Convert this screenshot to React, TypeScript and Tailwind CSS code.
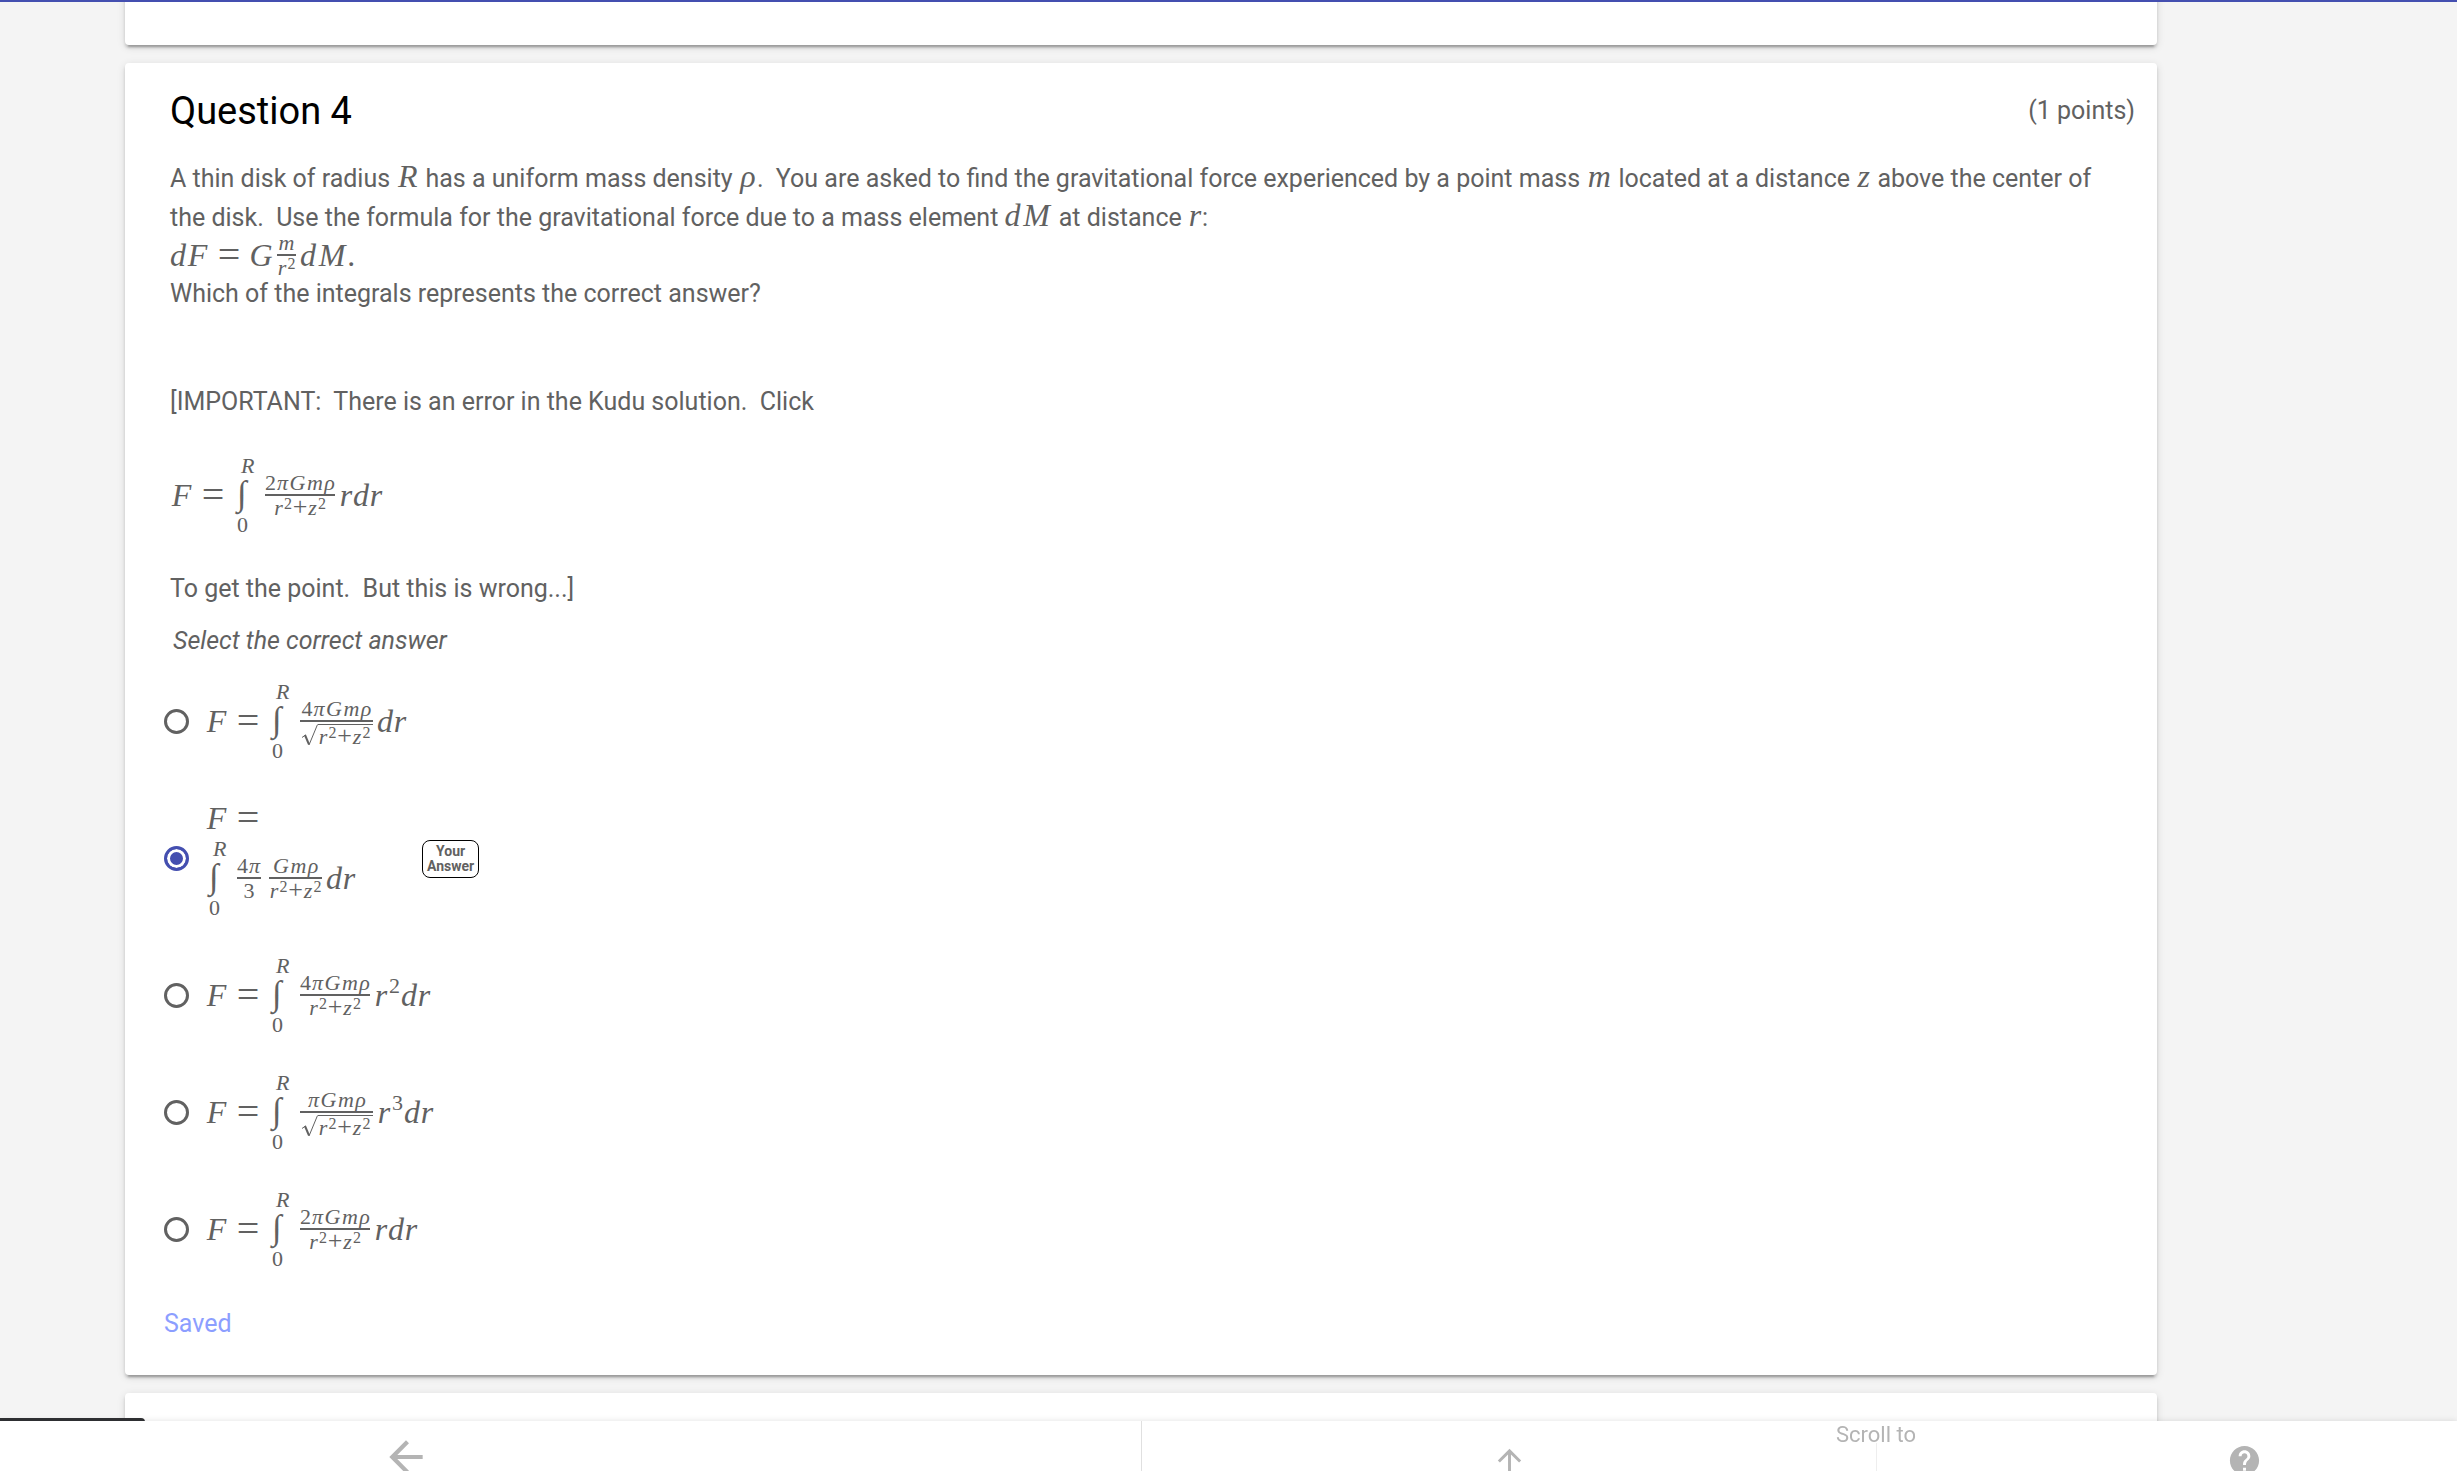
import type { ReactNode } from "react";
import { MdArrowBack, MdArrowUpward, MdHelp } from "react-icons/md";

// advance widths of the math symbols, normal size
const symbolWidth: Record<string, string> = {
  R: "w-[23px]",
  F: "w-[23px]",
  G: "w-[24px]",
  M: "w-[32px]",
  m: "w-[26px]",
  d: "w-[16px]",
  r: "w-[14px]",
  z: "w-[15px]",
  ρ: "w-[18px]",
};

// the same inside fractions
const smallWidth: Record<string, string> = {
  G: "w-[17px]",
  m: "w-[18px]",
  r: "w-[10px]",
  z: "w-[10px]",
  π: "w-[13px]",
  ρ: "w-[11px]",
};

function Sym({ children }: { children: string }) {
  return (
    <span className="font-['Liberation_Serif',serif] text-[32px] leading-none italic whitespace-nowrap">
      {children.split("").map((ch, i) => (
        <span key={i} className={`inline-block text-center ${symbolWidth[ch] ?? ""}`}>
          {ch}
        </span>
      ))}
    </span>
  );
}

function Small({ children }: { children: string }) {
  return (
    <>
      {children.split("").map((ch, i) => (
        <span
          key={i}
          className={`inline-block text-center ${smallWidth[ch] ?? "w-[11px]"} ${/\d/.test(ch) ? "not-italic" : "italic"}`}
        >
          {ch}
        </span>
      ))}
    </>
  );
}

function Plus() {
  return <span className="inline-block w-[15px] text-center text-[26px] leading-[16px]">+</span>;
}

function Sup({ children }: { children: string }) {
  return <span className="w-[13px] pb-[18px] pl-[1px] text-[22px] leading-none not-italic">{children}</span>;
}

function SmallSup({ children }: { children: string }) {
  return <span className="inline-block w-[9px] -translate-y-[6px] text-[16px] leading-none not-italic">{children}</span>;
}

function Equals() {
  return <span className="mx-[8px] w-[24px] text-center text-[40px] leading-[30px] not-italic">=</span>;
}

function Frac({ top, bottom }: { top: ReactNode; bottom: ReactNode }) {
  return (
    <span className="mx-[4px] flex flex-col text-center text-[22px] not-italic">
      <span className="h-[22px] leading-[22px]">{top}</span>
      <span className="h-[2px] bg-[#616161]" />
      <span className="h-[22px] leading-[24px]">{bottom}</span>
    </span>
  );
}

function SumOfSquares() {
  return (
    <>
      <Small>r</Small>
      <SmallSup>2</SmallSup>
      <Plus />
      <Small>z</Small>
      <SmallSup>2</SmallSup>
    </>
  );
}

function Root({ children }: { children: ReactNode }) {
  return (
    <span className="flex pt-[2px] pl-[1px]">
      <svg className="h-[22px] w-[17px] shrink-0" viewBox="0 0 17 22" fill="none" stroke="currentColor">
        <path d="M1 13.5L4.5 11" strokeWidth="1" />
        <path d="M4 11L8 20.5" strokeWidth="2" />
        <path d="M8 21L16.5 0.5" strokeWidth="1" />
      </svg>
      <span className="h-[22px] border-t border-[#616161] pr-[2px]">{children}</span>
    </span>
  );
}

function Integral() {
  return (
    <span className="flex w-[28px] flex-col text-[22px]">
      <span className="h-[20px] pl-[8px] leading-[20px]">R</span>
      <span className="h-[38px] pl-[4px] text-[35px] leading-[36px] not-italic">∫</span>
      <span className="h-[20px] pl-[4px] leading-[22px] not-italic">0</span>
    </span>
  );
}

function Formula({ children }: { children: ReactNode }) {
  return (
    <span className="flex w-max items-center pb-[2px] font-['Liberation_Serif',serif] text-[32px] leading-[30px] whitespace-nowrap italic">
      {children}
    </span>
  );
}

type AnswerProps = {
  id: string;
  checked?: boolean;
  children: ReactNode;
};

function Answer({ id, checked, children }: AnswerProps) {
  return (
    <div className={`flex items-center ${checked ? "h-[157px]" : "h-[117px]"}`}>
      <input
        type="radio"
        name="answer"
        id={id}
        defaultChecked={checked}
        className="size-[25px] shrink-0 appearance-none rounded-full border-3 border-[#616161] checked:border-[#444fb0] checked:bg-[#444fb0] checked:shadow-[inset_0_0_0_3px_white]"
      />
      <label htmlFor={id} className="ml-[16px] w-[217px]">
        {children}
      </label>
      {checked && (
        <span className="rounded-[8px] border border-black px-[4px] py-[3px] text-center text-[14px] leading-[15px] font-bold">
          Your
          <br />
          Answer
        </span>
      )}
    </div>
  );
}

function Card({ className, children }: { className: string; children?: ReactNode }) {
  return (
    <section
      className={`rounded-[4px] bg-white shadow-[0_5px_2px_-3px_rgba(0,0,0,0.2),0_3px_3px_rgba(0,0,0,0.14),0_2px_8px_rgba(0,0,0,0.12)] ${className}`}
    >
      {children}
    </section>
  );
}

function Saved() {
  return <p className="pl-[39px] leading-[28px] text-[#8c9eff]">Saved</p>;
}

function Question() {
  return (
    <Card className="pt-[28px] pb-[37px]">
      <header className="flex items-center justify-between pr-[22px] pl-[45px]">
        <h2 className="text-[38px] leading-[40px] text-black">Question 4</h2>
        <span>(1 points)</span>
      </header>

      <div className="mt-[28px] px-[45px] leading-[38px]">
        <p className="leading-[39px]">
          A thin disk of radius <Sym>R</Sym> has a uniform mass density <Sym>ρ</Sym>.&nbsp; You are asked to find the
          gravitational force experienced by a point mass <Sym>m</Sym> located at a distance <Sym>z</Sym> above the
          center of the disk.&nbsp; Use the formula for the gravitational force due to a mass element <Sym>dM</Sym> at
          distance <Sym>r</Sym>:
        </p>
        <div className="flex h-[38px] items-center">
          <Formula>
            <Sym>dF</Sym>
            <Equals />
            <Sym>G</Sym>
            <Frac
              top={<Small>m</Small>}
              bottom={
                <>
                  <Small>r</Small>
                  <SmallSup>2</SmallSup>
                </>
              }
            />
            <Sym>dM.</Sym>
          </Formula>
        </div>
        <p>Which of the integrals represents the correct answer?</p>

        <p className="mt-[70px]">[IMPORTANT:&nbsp; There is an error in the Kudu solution.&nbsp; Click</p>
        <div className="mt-[35px] mb-[34px]">
          <Formula>
            <Sym>F</Sym>
            <Equals />
            <Integral />
            <Frac top={<Small>2πGmρ</Small>} bottom={<SumOfSquares />} />
            <Sym>rdr</Sym>
          </Formula>
        </div>
        <p>To get the point.&nbsp; But this is wrong...]</p>
        <p className="mt-[14px] pl-[3px] italic">Select the correct answer</p>
      </div>

      <form className="mt-[3px] mb-[22px] pl-[39px]">
        <Answer id="a1">
          <Formula>
            <Sym>F</Sym>
            <Equals />
            <Integral />
            <Frac
              top={<Small>4πGmρ</Small>}
              bottom={
                <Root>
                  <SumOfSquares />
                </Root>
              }
            />
            <Sym>dr</Sym>
          </Formula>
        </Answer>
        <Answer id="a2" checked>
          <span className="flex h-[40px] items-center">
            <Formula>
              <Sym>F</Sym>
              <Equals />
            </Formula>
          </span>
          <Formula>
            <Integral />
            <Frac top={<Small>4π</Small>} bottom={<Small>3</Small>} />
            <Frac top={<Small>Gmρ</Small>} bottom={<SumOfSquares />} />
            <Sym>dr</Sym>
          </Formula>
        </Answer>
        <Answer id="a3">
          <Formula>
            <Sym>F</Sym>
            <Equals />
            <Integral />
            <Frac top={<Small>4πGmρ</Small>} bottom={<SumOfSquares />} />
            <Sym>r</Sym>
            <Sup>2</Sup>
            <Sym>dr</Sym>
          </Formula>
        </Answer>
        <Answer id="a4">
          <Formula>
            <Sym>F</Sym>
            <Equals />
            <Integral />
            <Frac
              top={<Small>πGmρ</Small>}
              bottom={
                <Root>
                  <SumOfSquares />
                </Root>
              }
            />
            <Sym>r</Sym>
            <Sup>3</Sup>
            <Sym>dr</Sym>
          </Formula>
        </Answer>
        <Answer id="a5">
          <Formula>
            <Sym>F</Sym>
            <Equals />
            <Integral />
            <Frac top={<Small>2πGmρ</Small>} bottom={<SumOfSquares />} />
            <Sym>rdr</Sym>
          </Formula>
        </Answer>
      </form>

      <Saved />
    </Card>
  );
}

function BottomNav() {
  return (
    <nav className="fixed inset-x-0 bottom-0 flex h-[50px] bg-white text-[#b4b4b4] shadow-[0_0_6px_rgba(0,0,0,0.12)]">
      <div className="flex w-[1142px] items-start justify-center border-r border-[#e0e0e0] pt-[11px] pr-[329px]">
        <button aria-label="Back">
          <MdArrowBack className="size-[50px]" />
        </button>
      </div>
      <div className="flex w-[734px] items-start justify-center pt-[22px]">
        <button aria-label="Scroll to top">
          <MdArrowUpward className="size-[35px]" />
        </button>
      </div>
      <div className="relative flex flex-1 items-start pt-[22px]">
        <span className="absolute top-0 left-0 -translate-x-1/2 text-[22px] leading-[28px] whitespace-nowrap">
          Scroll to
        </span>
        <div className="flex flex-1 justify-center border-l border-[#eeeeee] pl-[154px]">
          <button aria-label="Help">
            <MdHelp className="size-[35px]" />
          </button>
        </div>
      </div>
    </nav>
  );
}

export default function App() {
  return (
    <div className="h-screen overflow-hidden bg-[#f4f4f4] font-[Roboto,sans-serif] text-[25px] text-[#616161]">
      <div className="fixed inset-x-0 top-0 z-10 h-[2px] bg-[#444fb0]" />
      <main className="-mt-[20px] flex flex-col gap-[18px] pr-[300px] pl-[125px]">
        <Card className="pb-[37px]">
          <Saved />
        </Card>
        <Question />
        <Card className="h-[200px]" />
      </main>
      <div className="fixed bottom-0 left-0 h-[53px] w-[145px] rounded-tr-[4px] bg-[#303134]" />
      <BottomNav />
    </div>
  );
}
